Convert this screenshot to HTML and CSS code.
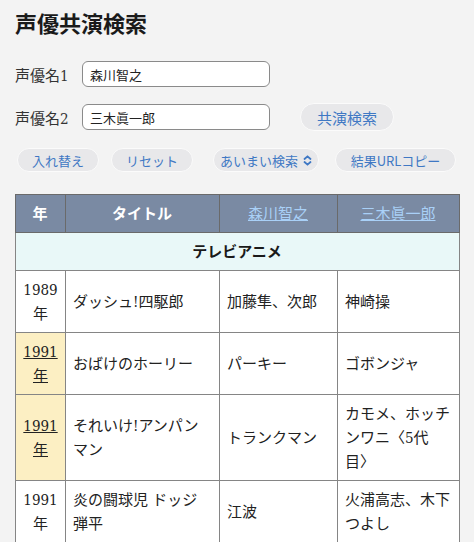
FILE: index.html
```html
<!DOCTYPE html>
<html lang="ja">
<head>
<meta charset="utf-8">
<title>声優共演検索</title>
<link rel="stylesheet" href="styles.css">
</head>
<body>
<h1 class="title">声優共演検索</h1>
<div class="form-row row1">
  <label class="label">声優名1</label>
  <input class="name-input" type="text" value="森川智之">
</div>
<div class="form-row row2">
  <label class="label">声優名2</label>
  <input class="name-input" type="text" value="三木眞一郎">
  <button class="pill pill-lg">共演検索</button>
</div>
<div class="actions">
  <button class="pill">入れ替え</button>
  <button class="pill">リセット</button>
  <button class="pill pill-select">あいまい検索<svg class="chev" width="9" height="11" viewBox="0 0 9 11"><path d="M1.5 4 L4.5 1.3 L7.5 4 M1.5 7 L4.5 9.7 L7.5 7" fill="none" stroke="#3f78c4" stroke-width="1.8" stroke-linecap="round" stroke-linejoin="round"/></svg></button>
  <button class="pill pill-copy">結果URLコピー</button>
</div>
<table class="result">
  <colgroup>
    <col class="c-year"><col class="c-title"><col class="c-a"><col class="c-b">
  </colgroup>
  <thead>
    <tr>
      <th>年</th>
      <th>タイトル</th>
      <th><a href="#">森川智之</a></th>
      <th><a href="#">三木眞一郎</a></th>
    </tr>
  </thead>
  <tbody>
    <tr class="section"><th colspan="4">テレビアニメ</th></tr>
    <tr>
      <td class="year">1989年</td>
      <td>ダッシュ!四駆郎</td>
      <td>加藤隼、次郎</td>
      <td>神崎操</td>
    </tr>
    <tr>
      <td class="year hl"><a href="#">1991年</a></td>
      <td>おばけのホーリー</td>
      <td>パーキー</td>
      <td>ゴボンジャ</td>
    </tr>
    <tr>
      <td class="year hl"><a href="#">1991年</a></td>
      <td>それいけ!アンパンマン</td>
      <td>トランクマン</td>
      <td>カモメ、ホッチンワニ〈5代目〉</td>
    </tr>
    <tr>
      <td class="year">1991年</td>
      <td>炎の闘球児 ドッジ弾平</td>
      <td>江波</td>
      <td>火浦高志、木下つよし</td>
    </tr>
  </tbody>
</table>
</body>
</html>
```
FILE: styles.css
```css
html, body {
  margin: 0;
  padding: 0;
  background: #f3f3f3;
}
body {
  padding: 0 15px;
  font-family: "DejaVu Serif Condensed", "Liberation Serif", "Noto Sans CJK JP", serif;
  color: #222;
  overflow: hidden;
  text-spacing-trim: space-all;
}
.title {
  margin: 11px 0 0;
  font-size: 22px;
  line-height: 26px;
  font-weight: bold;
  color: #1a1a1a;
}
.form-row {
  display: flex;
  align-items: center;
}
.row1 {
  margin-top: 24px;
  height: 26px;
}
.row2 {
  margin-top: 16px;
  height: 28px;
}
.label {
  width: 67px;
  font-size: 15px;
  color: #333;
}
.name-input {
  box-sizing: border-box;
  width: 188px;
  height: 26px;
  margin: 0;
  padding: 0 7px;
  border: 1.5px solid #8a8a8a;
  border-radius: 6px;
  background: #fff;
  font-family: "Noto Sans CJK JP", sans-serif;
  font-size: 13px;
  color: #222;
}
.pill {
  box-sizing: border-box;
  height: 24px;
  margin: 0;
  padding: 0 14px;
  border: 1.5px solid #fbfbfb;
  border-radius: 14px;
  background: #e8e8ea;
  font-family: "Noto Sans CJK JP", sans-serif;
  font-size: 13px;
  line-height: 1;
  color: #3f78c4;
  display: inline-flex;
  align-items: center;
  justify-content: center;
}
.pill-lg {
  height: 28px;
  width: 94px;
  margin-left: 30px;
  font-size: 15px;
  padding: 0;
}
.actions {
  display: flex;
  align-items: center;
  margin-top: 17px;
  padding-left: 2px;
  gap: 12px;
}
.actions .pill:nth-child(1),
.actions .pill:nth-child(2) { width: 82px; padding: 0; }
.pill-select {
  margin-left: 8px;
  width: 106px;
  padding: 0;
}
.chev {
  margin-left: 5px;
}
.pill-copy {
  margin-left: 4px;
  width: 121px;
  padding: 0;
}
.result {
  margin-top: 22px;
  width: 444px;
  table-layout: fixed;
  border-collapse: collapse;
  font-size: 15px;
  line-height: 24px;
  background: #fff;
}
.c-year { width: 50px; }
.c-title { width: 154px; }
.c-a { width: 118px; }
.c-b { width: 122px; }
.result th,
.result td {
  border: 1.5px solid #858585;
  padding: 6.5px 8px 6.5px 7px;
  vertical-align: middle;
}
.result td { text-align: left; }
.result thead th {
  background: #7a8aa3;
  color: #fff;
  font-weight: bold;
  border-color: #6a6a6a;
}
.result thead th a {
  color: #a9d0f7;
  text-decoration: underline;
  font-weight: normal;
}
.section th {
  background: #e9f8f8;
  font-weight: bold;
  color: #1a1a1a;
}
.result td.year {
  text-align: center;
  padding: 6.5px 6px;
}
.result td.hl {
  background: #fcefc3;
}
.result td.hl a {
  color: #222;
  text-decoration: underline;
}
```
